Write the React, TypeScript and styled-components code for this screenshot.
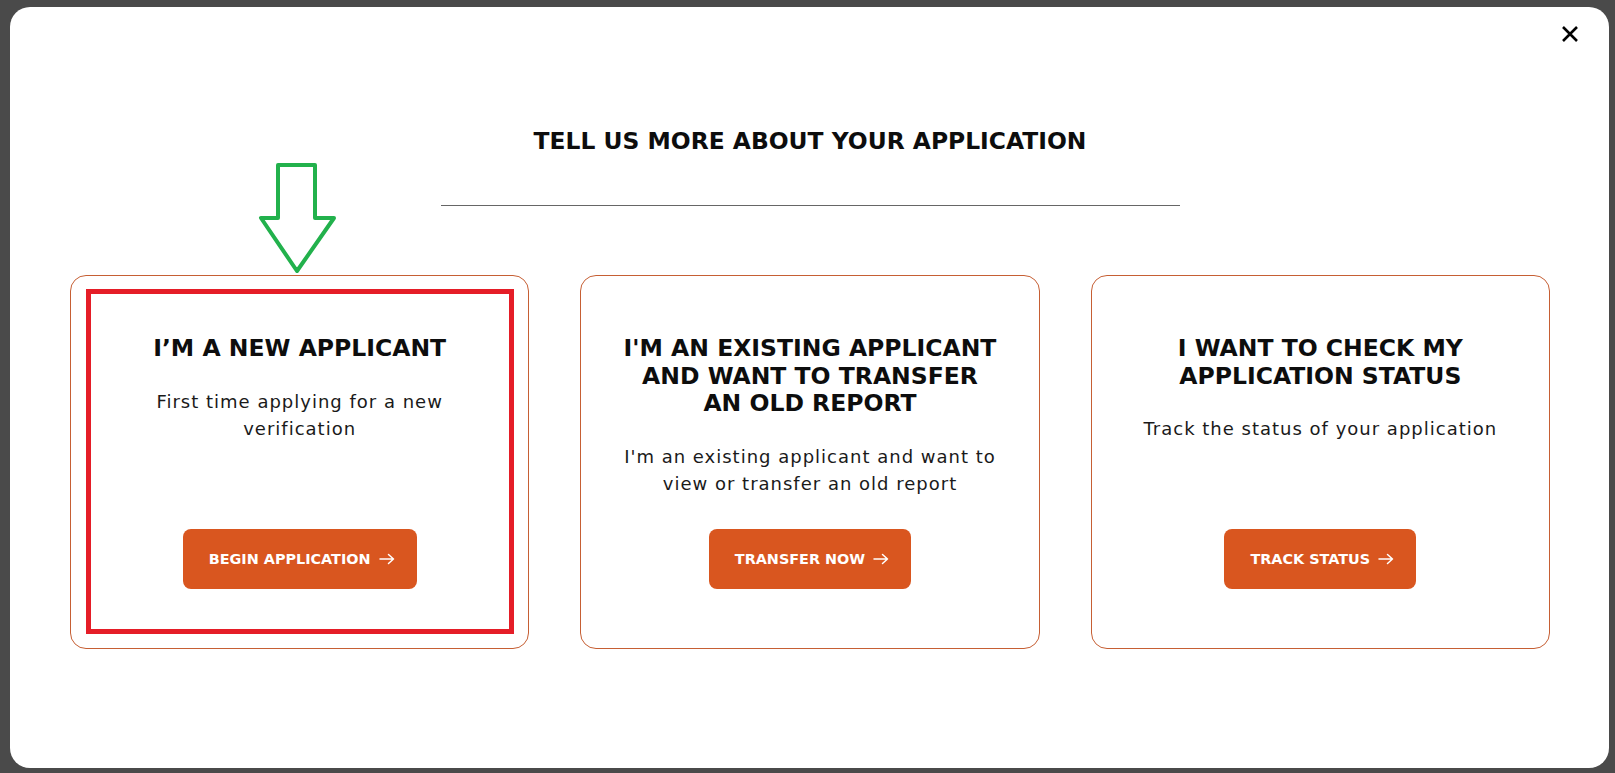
import React from "react";
import styled, { createGlobalStyle } from "styled-components";

const Global = createGlobalStyle`
  html, body { margin: 0; padding: 0; background: #4a4a4a; }
  body { font-family: "DejaVu Sans", "Noto Sans", sans-serif; }
  * { box-sizing: border-box; }
`;

const Page = styled.div`
  width: 1615px;
  height: 773px;
  padding: 7px 6px 5px 10px;
  display: flex;
`;

const Modal = styled.div`
  position: relative;
  flex: 1;
  background: #ffffff;
  border-radius: 20px;
  padding: 119px 59px 0 60px;
  display: flex;
  flex-direction: column;
  align-items: center;
`;

const CloseButton = styled.button`
  position: absolute;
  top: 18px;
  right: 30px;
  width: 18px;
  height: 18px;
  padding: 0;
  border: none;
  background: transparent;
  display: flex;
  align-items: center;
  justify-content: center;
  cursor: pointer;
`;

const Title = styled.h2`
  margin: 0;
  font-family: "DejaVu Sans", sans-serif;
  font-size: 23.4px;
  font-weight: 700;
  line-height: 30px;
  color: #0d0d0d;
  text-align: center;
`;

const Divider = styled.hr`
  width: 739px;
  margin: 49px 0 0 0;
  border: none;
  border-top: 1px solid #666666;
`;

const CardGrid = styled.div`
  margin-top: 69px;
  width: 100%;
  display: grid;
  grid-template-columns: repeat(3, 1fr);
  column-gap: 51px;
`;

const Card = styled.div`
  position: relative;
  border: 1px solid #c65f34;
  border-radius: 16px;
  padding: 59px 38px 59px;
  display: flex;
  flex-direction: column;
  align-items: center;
  text-align: center;
`;

const CardHeading = styled.h3`
  margin: 0 0 25px 0;
  font-family: "DejaVu Sans", sans-serif;
  font-size: 23.5px;
  font-weight: 700;
  line-height: 27.5px;
  color: #0d0d0d;
`;

const CardText = styled.p`
  margin: 0 0 32px 0;
  font-family: "DejaVu Sans", sans-serif;
  font-size: 18px;
  font-weight: 400;
  letter-spacing: 1px;
  line-height: 27px;
  color: #1a1a1a;
`;

const ActionButton = styled.button`
  margin-top: auto;
  height: 60px;
  padding: 0 22px 0 26px;
  border: none;
  border-radius: 8px;
  background: #d9561f;
  color: #ffffff;
  display: flex;
  align-items: center;
  gap: 8px;
  font-family: "DejaVu Sans", sans-serif;
  font-size: 14.4px;
  font-weight: 700;
  cursor: pointer;
`;

const Highlight = styled.div`
  position: absolute;
  top: 13px;
  left: 15px;
  right: 14px;
  bottom: 14px;
  border: 5px solid #e51d27;
  pointer-events: none;
`;

const Pointer = styled.svg`
  position: absolute;
  left: 239px;
  top: 149px;
  pointer-events: none;
`;

const Arrow = () => (
  <svg width="16" height="12" viewBox="0 0 16 12" fill="none">
    <path d="M1 6h13.5M9.5 1.5L14.5 6l-5 4.5" stroke="#fff" strokeWidth="1.5" strokeLinecap="round" strokeLinejoin="round" />
  </svg>
);

const cards = [
  {
    heading: "I’M A NEW APPLICANT",
    text: "First time applying for a new verification",
    action: "BEGIN APPLICATION",
    highlighted: true,
  },
  {
    heading: "I'M AN EXISTING APPLICANT AND WANT TO TRANSFER AN OLD REPORT",
    text: "I'm an existing applicant and want to view or transfer an old report",
    action: "TRANSFER NOW",
    highlighted: false,
  },
  {
    heading: "I WANT TO CHECK MY APPLICATION STATUS",
    text: "Track the status of your application",
    action: "TRACK STATUS",
    highlighted: false,
  },
];

export default function App() {
  return (
    <>
      <Global />
      <Page>
        <Modal>
          <CloseButton aria-label="Close">
            <svg width="18" height="18" viewBox="0 0 18 18">
              <path d="M2 2L16 16M16 2L2 16" stroke="#000" strokeWidth="2.6" strokeLinecap="butt" />
            </svg>
          </CloseButton>
          <Title>TELL US MORE ABOUT YOUR APPLICATION</Title>
          <Divider />
          <CardGrid>
            {cards.map((c) => (
              <Card key={c.action}>
                <CardHeading>{c.heading}</CardHeading>
                <CardText>{c.text}</CardText>
                <ActionButton>
                  {c.action}
                  <Arrow />
                </ActionButton>
                {c.highlighted && <Highlight />}
              </Card>
            ))}
          </CardGrid>
          <Pointer width="90" height="125" viewBox="0 0 90 125">
            <polygon
              points="29,9 66,9 66,62 85,62 48,115 12,62 29,62"
              fill="none"
              stroke="#22b14c"
              strokeWidth="4"
              strokeLinejoin="round"
            />
          </Pointer>
        </Modal>
      </Page>
    </>
  );
}
